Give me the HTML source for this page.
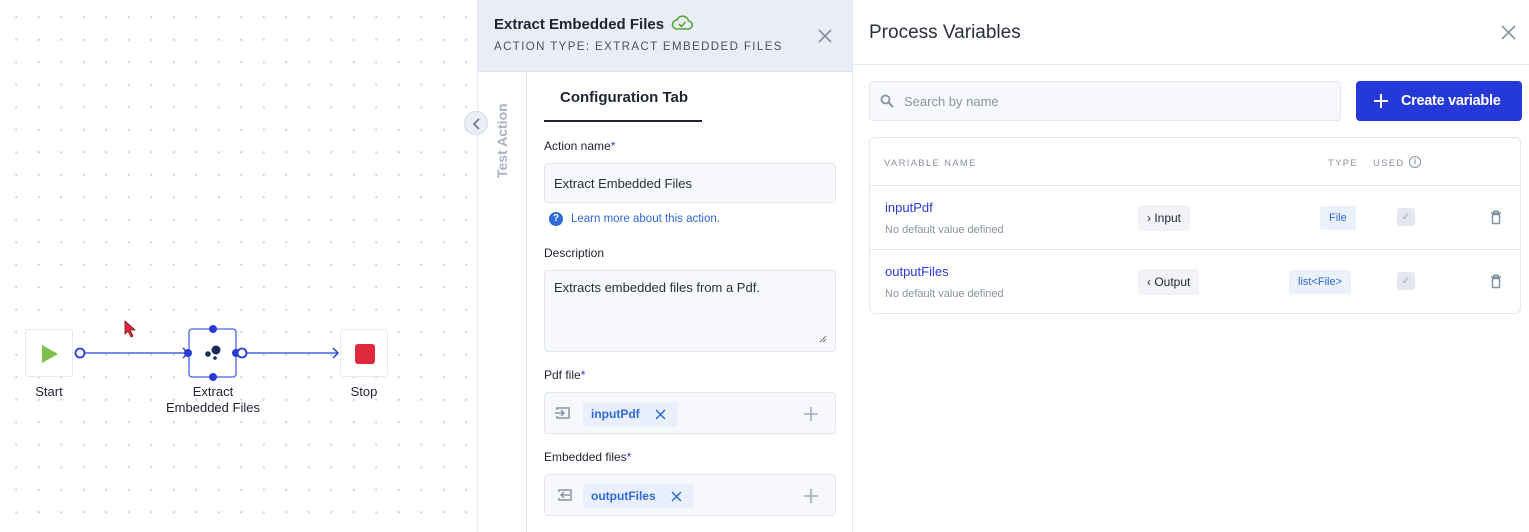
<!DOCTYPE html>
<html><head><meta charset="utf-8"><style>
*{box-sizing:border-box;margin:0;padding:0}
body{width:1529px;height:532px;overflow:hidden;font-family:"Liberation Sans",sans-serif;background:#fff;position:relative;color:#1f2433}
.canvas{position:absolute;left:0;top:0;width:478px;height:532px;background-color:#fff;background-image:radial-gradient(circle,#d3d7e0 1px,transparent 1.3px);background-size:22.5px 22.5px;background-position:5px 6px}
.abs{position:absolute}
.node{position:absolute;width:48px;height:48px;border:1px solid #e6e9f2;border-radius:3px;background:#fff}
.lbl{position:absolute;font-size:13px;color:#1f2433;text-align:center;line-height:16px}
.mid{position:absolute;left:477px;top:0;width:375px;height:532px;background:#fff;border-left:1px solid #e3e7ef}
.hdr{position:absolute;left:0;top:0;width:374px;height:72px;background:#e9edf5;border-bottom:1px solid #dde3ee}
.side{position:absolute;left:0;top:72px;width:49px;height:460px;border-right:1px solid #dde3ee}
.fl{position:absolute;left:66px;font-size:12px;color:#1f2433}
.fl b{color:#2a3bd9;font-weight:normal}
.inp{position:absolute;left:66px;width:292px;background:#f6f8fc;border:1px solid #e3e7ef;border-radius:4px;font-size:13px;color:#2a2f3d}
.chip{position:absolute;top:9px;height:24px;background:#e9f0fb;border-radius:3px;font-size:12px;color:#2f6ad6;line-height:24px;padding-left:8px;font-weight:bold}
.right{position:absolute;left:852px;top:0;width:677px;height:532px;background:#fff;border-left:1px solid #e3e7ef}
.tbl{position:absolute;left:16px;top:137px;width:652px;height:177px;border:1px solid #e3e7ef;border-radius:6px}
.row{position:absolute;left:0;width:650px;border-top:1px solid #e3e7ef;height:64px}
.vn{position:absolute;left:15px;top:14px;font-size:13px;color:#2a3bd9}
.vd{position:absolute;left:15px;top:38px;font-size:11px;color:#8a91a3}
.dir{position:absolute;top:19px;height:26px;background:#f1f3f7;border-radius:3px;font-size:12px;line-height:26px;padding:0 9px;color:#1f2433}
.typ{position:absolute;top:20px;height:24px;background:#eaf1fb;border-radius:3px;font-size:11px;line-height:24px;padding:0 9px;color:#2f6ad6}
.chk{position:absolute;left:527px;top:22px;width:18px;height:18px;background:#e3e7ef;border-radius:3px;color:#a9b0bf;font-size:11px;text-align:center;line-height:18px}
</style></head><body>
<div class="canvas">
  <div class="node" style="left:25px;top:329px"><svg class="abs" style="left:15px;top:14px" width="18" height="20"><polygon points="1,1 17,10 1,19" fill="#7cc04b"/></svg></div>
  <div class="lbl" style="left:25px;top:384px;width:48px">Start</div>
  <svg class="abs" style="left:70px;top:320px" width="300" height="70">
    <line x1="14" y1="33" x2="118" y2="33" stroke="#4a63e0" stroke-width="1.5"/>
    <polyline points="113,28 118,33 113,38" fill="none" stroke="#2a3bd9" stroke-width="1.5"/>
    <circle cx="10" cy="33" r="4.5" fill="#fff" stroke="#2a3bd9" stroke-width="1.8"/>
    <rect x="119" y="9" width="47" height="48" rx="3" fill="#fff" stroke="#4a63e0" stroke-width="1.3"/>
    <circle cx="118" cy="33" r="4" fill="#2a3bd9"/>
    <circle cx="143" cy="9" r="4" fill="#2a3bd9"/>
    <circle cx="143" cy="57" r="4" fill="#2a3bd9"/>
    <circle cx="166" cy="33" r="4" fill="#2a3bd9"/>
    <circle cx="172" cy="33" r="4.5" fill="#fff" stroke="#2a3bd9" stroke-width="1.8"/>
    <line x1="177" y1="33" x2="268" y2="33" stroke="#4a63e0" stroke-width="1.5"/>
    <polyline points="263,28 268,33 263,38" fill="none" stroke="#2a3bd9" stroke-width="1.5"/>
    <circle cx="146" cy="30" r="4.5" fill="#1c2a55"/>
    <circle cx="138" cy="34" r="2.8" fill="#1c2a55"/>
    <circle cx="145" cy="38" r="1.8" fill="#1c2a55"/>
  </svg>
  <div class="lbl" style="left:150px;top:384px;width:126px">Extract<br>Embedded Files</div>
  <div class="node" style="left:340px;top:329px"><div class="abs" style="left:14px;top:14px;width:20px;height:20px;background:#e0293a;border-radius:3px"></div></div>
  <div class="lbl" style="left:340px;top:384px;width:48px">Stop</div>
  <svg class="abs" style="left:124px;top:320px" width="14" height="20"><polygon points="1,1 1,14 4,11 7,17 9,16 6,10 11,10" fill="#e0293a" stroke="#7a0d16" stroke-width="0.8"/></svg>
</div>

<div class="mid">
  <div class="hdr">
    <div class="abs" style="left:16px;top:16px;font-size:15px;font-weight:bold;color:#1f2433">Extract Embedded Files</div>
    <svg class="abs" style="left:193px;top:15px" width="22" height="16" viewBox="0 0 22 16"><path d="M6 14h11a4 4 0 0 0 .5-8A6 6 0 0 0 6 5a4.5 4.5 0 0 0 0 9z" fill="none" stroke="#5aa33a" stroke-width="1.6"/><polyline points="8,9 10.5,11.5 14.5,7" fill="none" stroke="#5aa33a" stroke-width="1.6"/></svg>
    <div class="abs" style="left:16px;top:41px;font-size:11.5px;letter-spacing:1.4px;color:#4a5163">ACTION TYPE: EXTRACT EMBEDDED FILES</div>
    <svg class="abs" style="left:339px;top:28px" width="16" height="16"><path d="M2 2L14 14M14 2L2 14" stroke="#8a93a6" stroke-width="1.8"/></svg>
  </div>
  <div class="side">
    <div class="abs" style="left:16px;top:106px;transform:rotate(-90deg);transform-origin:0 0;font-size:14px;font-weight:bold;color:#a9b2c3;white-space:nowrap;width:90px">Test Action</div>
  </div>
  <div class="abs" style="left:-14px;top:111px;width:24px;height:24px;border-radius:50%;background:#e9edf5;border:1px solid #d4dae6"><svg class="abs" style="left:7px;top:6px" width="10" height="12"><polyline points="7,1 2,6 7,11" fill="none" stroke="#6b7488" stroke-width="1.6"/></svg></div>
  <div class="abs" style="left:82px;top:89px;font-size:15px;font-weight:bold;color:#1f2433">Configuration Tab</div>
  <div class="abs" style="left:66px;top:120px;width:158px;height:2px;background:#1f2433"></div>
  <div class="fl" style="top:139px">Action name<b>*</b></div>
  <div class="inp" style="top:163px;height:40px;padding:12px 9px">Extract Embedded Files</div>
  <div class="abs" style="left:71px;top:212px;width:14px;height:14px;border-radius:50%;background:#2f6ad6;color:#fff;font-size:10px;font-weight:bold;text-align:center;line-height:14px">?</div>
  <div class="abs" style="left:93px;top:213px;font-size:11.5px;color:#2f6ad6">Learn more about this action.</div>
  <div class="fl" style="top:246px">Description</div>
  <div class="inp" style="top:270px;height:82px;padding:9px 9px">Extracts embedded files from a Pdf.
    <svg class="abs" style="right:8px;bottom:8px" width="8" height="8"><path d="M1 7L7 1M4 7L7 4" stroke="#555" stroke-width="0.8"/></svg></div>
  <div class="fl" style="top:368px">Pdf file<b>*</b></div>
  <div class="inp" style="top:392px;height:42px">
    <svg class="abs" style="left:9px;top:12px" width="18" height="16"><path d="M3 5V3h12v10H3v-2M1 8h9M7 5l3 3-3 3" fill="none" stroke="#8a93a6" stroke-width="1.5"/></svg>
    <div class="chip" style="left:38px;width:95px">inputPdf<svg class="abs" style="left:72px;top:7px" width="11" height="11"><path d="M1 1L10 10M10 1L1 10" stroke="#2f6ad6" stroke-width="1.5"/></svg></div>
    <svg class="abs" style="left:258px;top:13px" width="16" height="16"><path d="M8 1v14M1 8h14" stroke="#a5acbb" stroke-width="1.6"/></svg>
  </div>
  <div class="fl" style="top:450px">Embedded files<b>*</b></div>
  <div class="inp" style="top:474px;height:42px">
    <svg class="abs" style="left:9px;top:12px" width="18" height="16"><path d="M5 5V3h12v10H5v-2M16 8H7M10 5L7 8l3 3" fill="none" stroke="#8a93a6" stroke-width="1.5"/></svg>
    <div class="chip" style="left:38px;width:111px">outputFiles<svg class="abs" style="left:88px;top:7px" width="11" height="11"><path d="M1 1L10 10M10 1L1 10" stroke="#2f6ad6" stroke-width="1.5"/></svg></div>
    <svg class="abs" style="left:258px;top:13px" width="16" height="16"><path d="M8 1v14M1 8h14" stroke="#a5acbb" stroke-width="1.6"/></svg>
  </div>
</div>

<div class="right">
  <div class="abs" style="left:16px;top:22px;font-size:19px;color:#2a2f3d">Process Variables</div>
  <svg class="abs" style="left:648px;top:25px" width="15" height="15"><path d="M1 1L14 14M14 1L1 14" stroke="#8a93a6" stroke-width="1.6"/></svg>
  <div class="abs" style="left:0;top:64px;width:677px;height:1px;background:#e3e7ef"></div>
  <div class="abs" style="left:16px;top:81px;width:472px;height:40px;background:#f6f8fc;border:1px solid #e3e7ef;border-radius:4px">
    <svg class="abs" style="left:10px;top:12px" width="14" height="14"><circle cx="5.5" cy="5.5" r="4" fill="none" stroke="#8a93a6" stroke-width="1.8"/><path d="M8.5 8.5L13 13" stroke="#8a93a6" stroke-width="2"/></svg>
    <div class="abs" style="left:34px;top:12px;font-size:13px;color:#8a93a6">Search by name</div>
  </div>
  <div class="abs" style="left:503px;top:81px;width:166px;height:40px;background:#2539d9;border-radius:4px">
    <svg class="abs" style="left:17px;top:12px" width="16" height="16"><path d="M8 1v14M1 8h14" stroke="#fff" stroke-width="2"/></svg>
    <div class="abs" style="left:45px;top:12px;font-size:14.5px;font-weight:bold;color:#fff;letter-spacing:-0.3px">Create variable</div>
  </div>
  <div class="tbl">
    <div class="abs" style="left:14px;top:20px;font-size:9.5px;letter-spacing:1.3px;color:#8a91a3">VARIABLE NAME</div>
    <div class="abs" style="left:458px;top:20px;font-size:9.5px;letter-spacing:1.3px;color:#8a91a3">TYPE</div>
    <div class="abs" style="left:503px;top:20px;font-size:9.5px;letter-spacing:1.3px;color:#8a91a3">USED</div>
    <div class="abs" style="left:539px;top:18px;width:12px;height:12px;border:1.3px solid #8a91a3;border-radius:50%;font-size:8px;color:#8a91a3;text-align:center;line-height:10px;font-weight:bold">i</div>
    <div class="row" style="top:47px">
      <div class="vn">inputPdf</div><div class="vd">No default value defined</div>
      <div class="dir" style="left:268px">›&nbsp;Input</div>
      <div class="typ" style="left:450px">File</div>
      <div class="chk">✓</div>
      <svg class="abs" style="left:620px;top:24px" width="12" height="15"><path d="M1 3h10M4 3V1h4v2M2.5 4.5h7v9h-7z" fill="none" stroke="#8a93a6" stroke-width="1.5"/></svg>
    </div>
    <div class="row" style="top:111px">
      <div class="vn">outputFiles</div><div class="vd">No default value defined</div>
      <div class="dir" style="left:268px">‹&nbsp;Output</div>
      <div class="typ" style="left:419px">list&lt;File&gt;</div>
      <div class="chk">✓</div>
      <svg class="abs" style="left:620px;top:24px" width="12" height="15"><path d="M1 3h10M4 3V1h4v2M2.5 4.5h7v9h-7z" fill="none" stroke="#8a93a6" stroke-width="1.5"/></svg>
    </div>
  </div>
</div>
</body></html>
